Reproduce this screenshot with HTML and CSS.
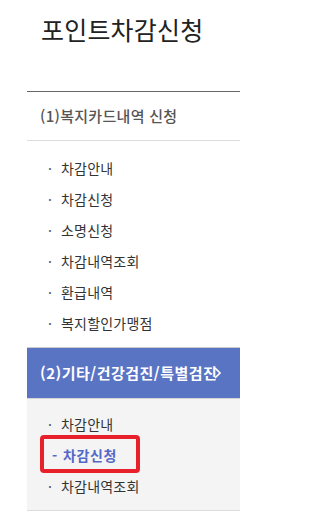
FILE: index.html
```html
<!DOCTYPE html>
<html lang="ko">
<head>
<meta charset="utf-8">
<link rel="stylesheet" href="styles.css">
</head>
<body>
<div class="wrap">
  <h1 class="title">포인트차감신청</h1>
  <nav class="side">
    <div class="group">
      <div class="group-head">(1)복지카드내역 신청</div>
      <ul class="sub">
        <li>차감안내</li>
        <li>차감신청</li>
        <li>소명신청</li>
        <li>차감내역조회</li>
        <li>환급내역</li>
        <li>복지할인가맹점</li>
      </ul>
    </div>
    <div class="group open">
      <div class="group-head on">(2)기타/건강검진/특별검진
        <svg class="chev" width="7" height="12" viewBox="0 0 7 12"><path d="M1 1 L6 6 L1 11" fill="none" stroke="#fff" stroke-width="1.6"/></svg>
      </div>
      <ul class="sub grey">
        <li>차감안내</li>
        <li class="active">차감신청<span class="mark"></span></li>
        <li>차감내역조회</li>
      </ul>
    </div>
  </nav>
</div>
</body>
</html>
```
FILE: styles.css
```css
html, body { margin: 0; padding: 0; background: #fff; }
body { font-family: "Noto Sans CJK KR", "Noto Sans", sans-serif; color: #333; }
.wrap { width: 213px; padding-left: 27px; }
.title {
  margin: 0;
  padding: 12px 0 0 14px;
  height: 79px;
  font-size: 25px;
  font-weight: 400;
  line-height: 34px;
  color: #222;
  letter-spacing: 0.2px;
  white-space: nowrap;
}
.side { border-top: 1px solid #666; }
.group-head {
  height: 48px;
  line-height: 48px;
  padding-left: 13px;
  font-size: 15px;
  font-weight: 500;
  color: #555;
  border-bottom: 1px solid #ddd;
  white-space: nowrap;
  letter-spacing: 0.3px;
}
.group.open { border-top: 1px solid #ccc; }
.group-head.on {
  position: relative;
  height: 50px;
  line-height: 50px;
  background: #5a74c4;
  color: #fff;
  font-weight: 700;
  border-bottom: 1px solid #d4d4d4;
  overflow: hidden;
  letter-spacing: 0.5px;
}
.chev { position: absolute; left: 187px; top: 19px; }
.sub { list-style: none; margin: 0; padding: 12px 0 8px 0; }
.sub li {
  position: relative;
  height: 31px;
  line-height: 31px;
  padding-left: 34px;
  font-size: 14px;
  color: #333;
  letter-spacing: 0.2px;
}
.sub li::before {
  content: "·";
  position: absolute;
  left: 21px;
  top: 0;
  color: #555;
}
.sub.grey { background: #f4f4f4; padding: 10px 0 8px 0; border-bottom: 1px solid #ddd; }
.sub li.active { color: #5468c8; font-weight: 700; padding-left: 36px; letter-spacing: 0.6px; }
.sub li.active::before { content: "-"; left: 25px; color: #5468c8; }
.mark {
  position: absolute;
  left: 13px;
  top: -5px;
  width: 100px;
  height: 38px;
  box-sizing: border-box;
  border: 4px solid #e8202a;
  border-radius: 4px;
}
```
